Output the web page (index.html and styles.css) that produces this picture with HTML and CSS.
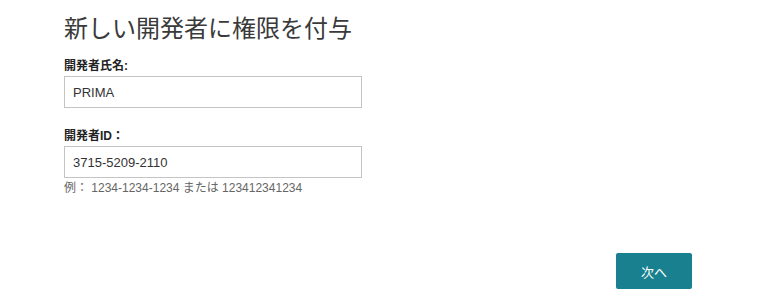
FILE: index.html
```html
<!DOCTYPE html>
<html>
  <head>
    <meta charset="utf-8" />
    <meta name="viewport" content="width=device-width, initial-scale=1" />
    <title>新しい開発者に権限を付与</title>
    <link rel="stylesheet" href="styles.css">
  </head>
  <body>
    <main class="page">
      <h1 class="title">新しい開発者に権限を付与</h1>
      <form class="grant-form">
        <div class="field">
          <label class="field-label" for="dev-name">開発者氏名:</label>
          <input id="dev-name" class="field-input" type="text" value="PRIMA" />
        </div>
        <div class="field">
          <label class="field-label" for="dev-id">開発者ID：</label>
          <input id="dev-id" class="field-input" type="text" value="3715-5209-2110" />
          <p class="field-hint">例： 1234-1234-1234 または 123412341234</p>
        </div>
        <div class="actions">
          <button class="btn-next" type="button">次へ</button>
        </div>
      </form>
    </main>
  </body>
</html>
```

FILE: styles.css
```css
body {
  margin: 0;
  background: #ffffff;
  color: #333333;
  font-family: "Liberation Sans", Arial, "Noto Sans CJK JP", sans-serif;
}
.page {
  padding: 14px 76px 0 64px;
}
.title {
  margin: 0;
  font-size: 24px;
  line-height: 30px;
  font-weight: normal;
  color: #3a3a3a;
}
.field {
  margin-top: 14px;
  width: 298px;
}
.field + .field {
  margin-top: 20px;
}
.field-label {
  display: block;
  font-size: 12px;
  line-height: 16px;
  font-weight: bold;
  color: #222222;
  margin-bottom: 2px;
}
.field-input {
  display: block;
  box-sizing: border-box;
  width: 298px;
  height: 32px;
  margin: 0;
  padding: 0 8px;
  border: 1px solid #c4c4c4;
  font-family: inherit;
  font-size: 13px;
  color: #333333;
  background: #ffffff;
}
.field-hint {
  margin: 3px 0 0;
  font-size: 12px;
  line-height: 14px;
  color: #666666;
}
.actions {
  display: flex;
  justify-content: flex-end;
  margin-top: 58px;
}
.btn-next {
  width: 76px;
  height: 36px;
  border: none;
  border-radius: 2px;
  background: #18808f;
  color: #ffffff;
  font-family: inherit;
  font-size: 13px;
}
```
